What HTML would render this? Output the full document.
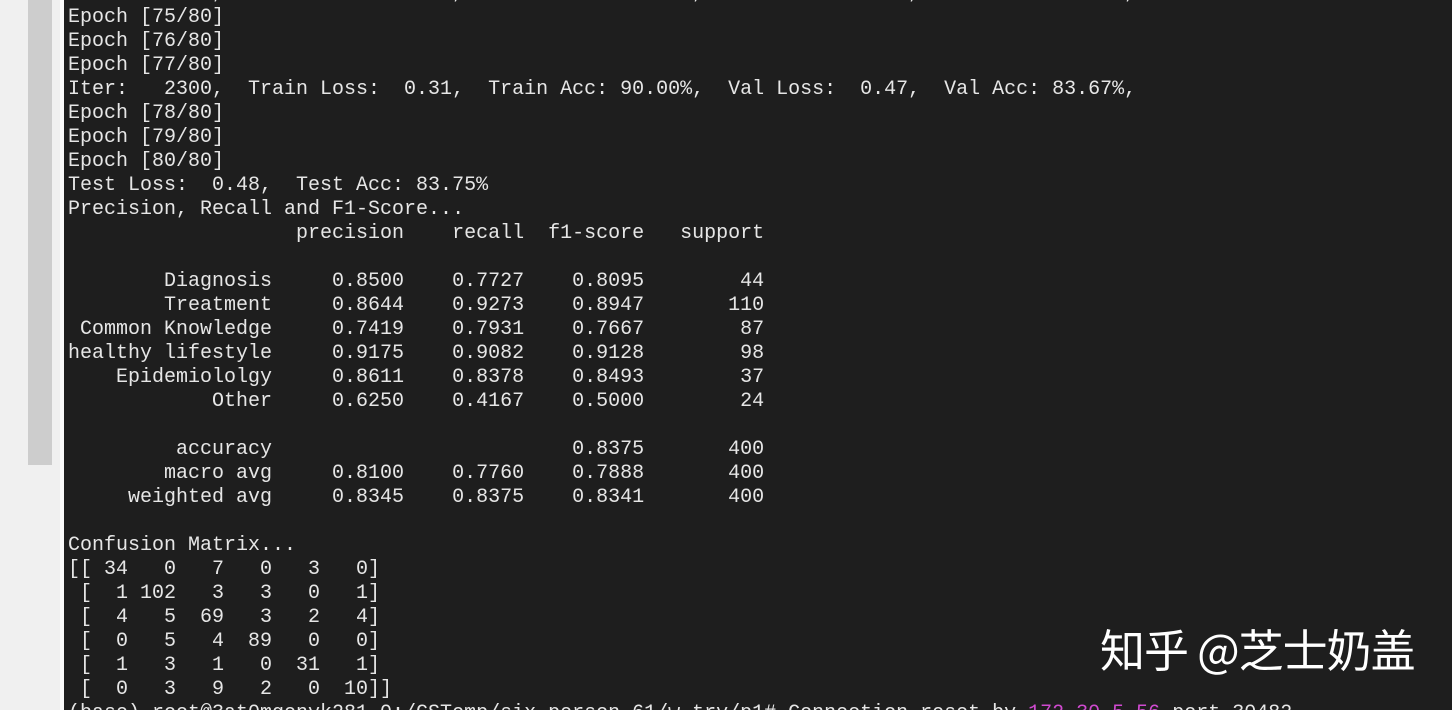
<!DOCTYPE html>
<html><head><meta charset="utf-8"><style>
html,body{margin:0;padding:0;width:1452px;height:710px;overflow:hidden;background:#1e1e1e}
#w{position:relative;width:1452px;height:710px;overflow:hidden}
#l1{position:absolute;left:0;top:0;width:60px;height:710px;background:#f0f0f0}
#sb{position:absolute;left:28px;top:0;width:24px;height:465px;background:#cdcdcd}
#l2{position:absolute;left:60px;top:0;width:4px;height:710px;background:#fafafa}
pre{position:absolute;left:68px;top:-18px;margin:0;font-family:"Liberation Mono",monospace;font-size:20px;line-height:24px;color:#e6e6e6}
.m{color:#d04ad0}
#wm{position:absolute;left:1100px;top:620px;font-family:"Noto Sans CJK SC",sans-serif;font-size:45px;color:#fff;line-height:56px;letter-spacing:-1px}
</style></head><body><div id="w">
<div id="l1"></div><div id="sb"></div><div id="l2"></div>
<pre>Iter:   2200,  Train Loss:  0.35,  Train Acc: 88.00%,  Val Loss:  0.47,  Val Acc: 83.00%,
Epoch [75/80]
Epoch [76/80]
Epoch [77/80]
Iter:   2300,  Train Loss:  0.31,  Train Acc: 90.00%,  Val Loss:  0.47,  Val Acc: 83.67%,
Epoch [78/80]
Epoch [79/80]
Epoch [80/80]
Test Loss:  0.48,  Test Acc: 83.75%
Precision, Recall and F1-Score...
                   precision    recall  f1-score   support

        Diagnosis     0.8500    0.7727    0.8095        44
        Treatment     0.8644    0.9273    0.8947       110
 Common Knowledge     0.7419    0.7931    0.7667        87
healthy lifestyle     0.9175    0.9082    0.9128        98
    Epidemiololgy     0.8611    0.8378    0.8493        37
            Other     0.6250    0.4167    0.5000        24

         accuracy                         0.8375       400
        macro avg     0.8100    0.7760    0.7888       400
     weighted avg     0.8345    0.8375    0.8341       400

Confusion Matrix...
[[ 34   0   7   0   3   0]
 [  1 102   3   3   0   1]
 [  4   5  69   3   2   4]
 [  0   5   4  89   0   0]
 [  1   3   1   0  31   1]
 [  0   3   9   2   0  10]]
(base) root@3at0mgenyk281-0:/GSTemp/six-person-61/w-try/p1# Connection reset by <span class="m">172.30.5.56</span> port 30482</pre>
<div id="wm">知乎 @芝士奶盖</div>
</div></body></html>
